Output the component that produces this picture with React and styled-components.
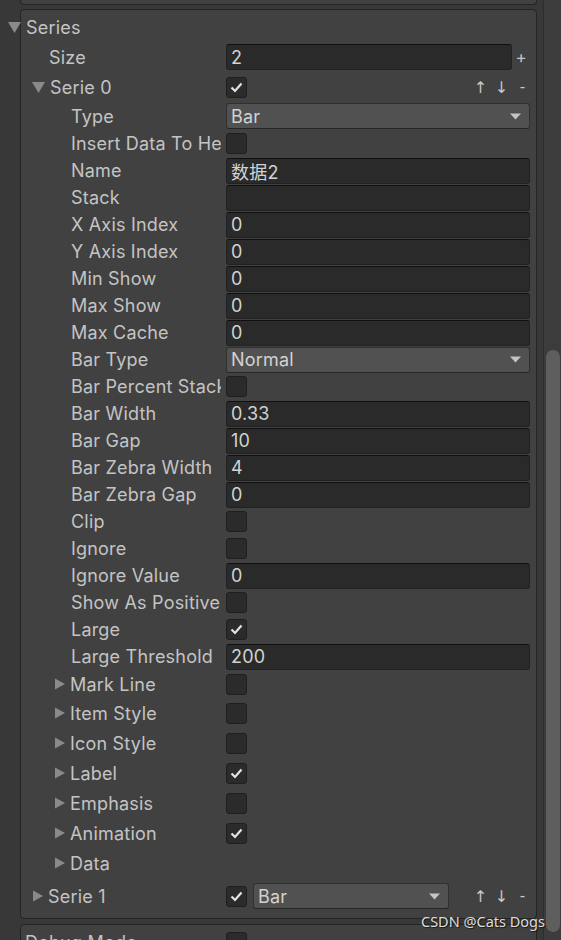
import React from 'react'
import styled, {createGlobalStyle} from 'styled-components'

const GlobalStyle = createGlobalStyle`
    html, body {
        margin: 0;
        padding: 0;
        background: #383838;
    }
    body {
        font-family: Inter, "Noto Sans", "Noto Sans CJK SC", sans-serif;
    }
`

const LABEL_WIDTH = 205

const Page = styled.div`
    position: relative;
    display: flex;
    align-items: flex-start;
    width: 561px;
    height: 940px;
    overflow: hidden;
    background: #383838;
`
const Inspector = styled.div`
    width: 543px;
    flex: none;
    display: flex;
    flex-direction: column;
`
const StubPanel = styled.div`
    flex: none;
    height: 4px;
    margin: 0 6px 0 20px;
    border: 1px solid #242424;
    border-top: none;
    border-radius: 0 0 4px 4px;
    background: #414141;
`
const Panel = styled.div`
    flex: none;
    margin: ${p => p.$top}px 6px 0 20px;
    padding: 2px 0 4px;
    border: 1px solid #242424;
    border-radius: 4px;
    background: #414141;
`
const Row = styled.div`
    display: flex;
    align-items: center;
    height: ${p => p.$h || 27}px;
`
const Label = styled.div`
    width: ${LABEL_WIDTH}px;
    flex: none;
    box-sizing: border-box;
    display: flex;
    align-items: center;
    padding-left: ${p => p.$indent}px;
    padding-right: 5px;
`
const LabelText = styled.span`
    flex: 1;
    min-width: 0;
    overflow: hidden;
    white-space: nowrap;
    font-size: 18px;
    letter-spacing: 0.2px;
    color: #c4c4c4;
`
const ArrowBox = styled.svg`
    flex: none;
    margin-left: -17px;
    margin-right: 5px;
`
const Value = styled.div`
    flex: 1;
    display: flex;
    align-items: center;
    padding-right: 6px;
    min-width: 0;
`
const TextField = styled.div`
    flex: 1;
    height: 26px;
    box-sizing: border-box;
    display: flex;
    align-items: center;
    padding-left: 4px;
    background: #2a2a2a;
    border: 1px solid #212121;
    border-top-color: #101010;
    border-radius: 3px;
    font-size: 18px;
    letter-spacing: 0.2px;
    color: #d2d2d2;
    white-space: nowrap;
`
const Dropdown = styled.div`
    ${p => p.$width ? `width: ${p.$width}px; flex: none;` : 'flex: 1;'}
    margin-left: ${p => p.$gap || 0}px;
    height: 26px;
    box-sizing: border-box;
    display: flex;
    align-items: center;
    justify-content: space-between;
    padding: 0 8px 0 4px;
    background: #515151;
    border: 1px solid #303030;
    border-bottom-color: #262626;
    border-radius: 3px;
    font-size: 18px;
    letter-spacing: 0.2px;
    color: #d2d2d2;
`
const Box = styled.div`
    width: 21px;
    height: 21px;
    flex: none;
    box-sizing: border-box;
    display: flex;
    align-items: center;
    justify-content: center;
    background: #2b2b2b;
    border: 1px solid #1f1f1f;
    border-radius: 3px;
`
const Spacer = styled.div`
    flex: 1;
`
const Plus = styled.span`
    width: 18px;
    flex: none;
    text-align: center;
    font-size: 17px;
    color: #c4c4c4;
`
const Reorder = styled.div`
    display: flex;
    margin-right: -3px;
`
const OrderBtn = styled.span`
    width: 21px;
    text-align: center;
    font-family: "DejaVu Sans", sans-serif;
    font-size: ${p => p.$small ? 15 : 16}px;
    color: #c8c8c8;
`
const Scrollbar = styled.div`
    flex: 1;
    align-self: stretch;
    border-left: 1px solid #2e2e2e;
    background: #3c3c3c;
    padding: 350px 0 0 2px;
`
const Thumb = styled.div`
    width: 14px;
    height: 582px;
    border-radius: 7px;
    background: #5e5e5e;
`
const Watermark = styled.div`
    position: absolute;
    right: 16px;
    top: 911px;
    font-family: "Noto Sans", "Noto Sans CJK SC", sans-serif;
    font-size: 14.5px;
    color: #dcdcdc;
    text-shadow: 1px 1px 1px rgba(0, 0, 0, 0.6);
`

function Arrow({open}) {
    return open
        ? <ArrowBox width='13' height='12' viewBox='0 0 13 12'>
            <polygon points='0,1 13,1 6.5,12' fill='#8a8a8a' />
        </ArrowBox>
        : <ArrowBox width='12' height='12' viewBox='0 0 12 12' style={{marginRight: 4}}>
            <polygon points='1,0.5 11,6 1,11.5' fill='#8a8a8a' />
        </ArrowBox>
}

function Check({checked}) {
    return <Box>
        {checked && <svg width='19' height='19' viewBox='0 0 19 19'>
            <path d='M4.5 9.5 L8 13 L14.5 5.5' fill='none' stroke='#e4e4e4' strokeWidth='2.2' />
        </svg>}
    </Box>
}

function Caret() {
    return <svg width='11' height='7' viewBox='0 0 11 7'>
        <polygon points='0,0.5 11,0.5 5.5,6.5' fill='#c4c4c4' />
    </svg>
}

function ReorderButtons() {
    return <Reorder>
        <OrderBtn>↑</OrderBtn>
        <OrderBtn>↓</OrderBtn>
        <OrderBtn $small>-</OrderBtn>
    </Reorder>
}

const props = [
    {label: 'Type', kind: 'dropdown', value: 'Bar', h: 28},
    {label: 'Insert Data To Head', kind: 'check'},
    {label: 'Name', kind: 'text', value: '数据2'},
    {label: 'Stack', kind: 'text', value: ''},
    {label: 'X Axis Index', kind: 'text', value: '0'},
    {label: 'Y Axis Index', kind: 'text', value: '0'},
    {label: 'Min Show', kind: 'text', value: '0'},
    {label: 'Max Show', kind: 'text', value: '0'},
    {label: 'Max Cache', kind: 'text', value: '0'},
    {label: 'Bar Type', kind: 'dropdown', value: 'Normal'},
    {label: 'Bar Percent Stack', kind: 'check'},
    {label: 'Bar Width', kind: 'text', value: '0.33'},
    {label: 'Bar Gap', kind: 'text', value: '10'},
    {label: 'Bar Zebra Width', kind: 'text', value: '4'},
    {label: 'Bar Zebra Gap', kind: 'text', value: '0'},
    {label: 'Clip', kind: 'check'},
    {label: 'Ignore', kind: 'check'},
    {label: 'Ignore Value', kind: 'text', value: '0'},
    {label: 'Show As Positive', kind: 'check'},
    {label: 'Large', kind: 'check', checked: true},
    {label: 'Large Threshold', kind: 'text', value: '200'},
    {label: 'Mark Line', kind: 'fold', checked: false, h: 28},
    {label: 'Item Style', kind: 'fold', checked: false, h: 30},
    {label: 'Icon Style', kind: 'fold', checked: false, h: 30},
    {label: 'Label', kind: 'fold', checked: true, h: 30},
    {label: 'Emphasis', kind: 'fold', checked: false, h: 30},
    {label: 'Animation', kind: 'fold', checked: true, h: 30},
    {label: 'Data', kind: 'fold', h: 30, noCheck: true},
]

function PropRow({item}) {
    const fold = item.kind === 'fold'
    return <Row $h={item.h}>
        <Label $indent={50}>
            {fold && <Arrow />}
            <LabelText>{item.label}</LabelText>
        </Label>
        <Value>
            {item.kind === 'text' && <TextField>{item.value}</TextField>}
            {item.kind === 'dropdown' && <Dropdown><span>{item.value}</span><Caret /></Dropdown>}
            {(item.kind === 'check' || (fold && !item.noCheck)) && <Check checked={item.checked} />}
        </Value>
    </Row>
}

export default function App() {
    return <Page>
        <GlobalStyle />
        <Inspector>
            <StubPanel />
            <Panel $top={4}>
                <Row $h={30}>
                    <Label $indent={4}>
                        <Arrow open />
                        <LabelText>Series</LabelText>
                    </Label>
                </Row>
                <Row $h={30}>
                    <Label $indent={28}><LabelText>Size</LabelText></Label>
                    <Value>
                        <TextField>2</TextField>
                        <Plus>+</Plus>
                    </Value>
                </Row>
                <Row $h={30}>
                    <Label $indent={28}>
                        <Arrow open />
                        <LabelText>Serie 0</LabelText>
                    </Label>
                    <Value>
                        <Check checked />
                        <Spacer />
                        <ReorderButtons />
                    </Value>
                </Row>
                {props.map(item => <PropRow key={item.label} item={item} />)}
                <Row $h={36}>
                    <Label $indent={28}>
                        <Arrow />
                        <LabelText>Serie 1</LabelText>
                    </Label>
                    <Value>
                        <Check checked />
                        <Dropdown $width={196} $gap={6}><span>Bar</span><Caret /></Dropdown>
                        <Spacer />
                        <ReorderButtons />
                    </Value>
                </Row>
            </Panel>
            <Panel $top={5}>
                <Row $h={30}>
                    <Label $indent={4}><LabelText>Debug Mode</LabelText></Label>
                    <Value><Check /></Value>
                </Row>
            </Panel>
        </Inspector>
        <Scrollbar>
            <Thumb />
        </Scrollbar>
        <Watermark>CSDN @Cats Dogs</Watermark>
    </Page>
}
